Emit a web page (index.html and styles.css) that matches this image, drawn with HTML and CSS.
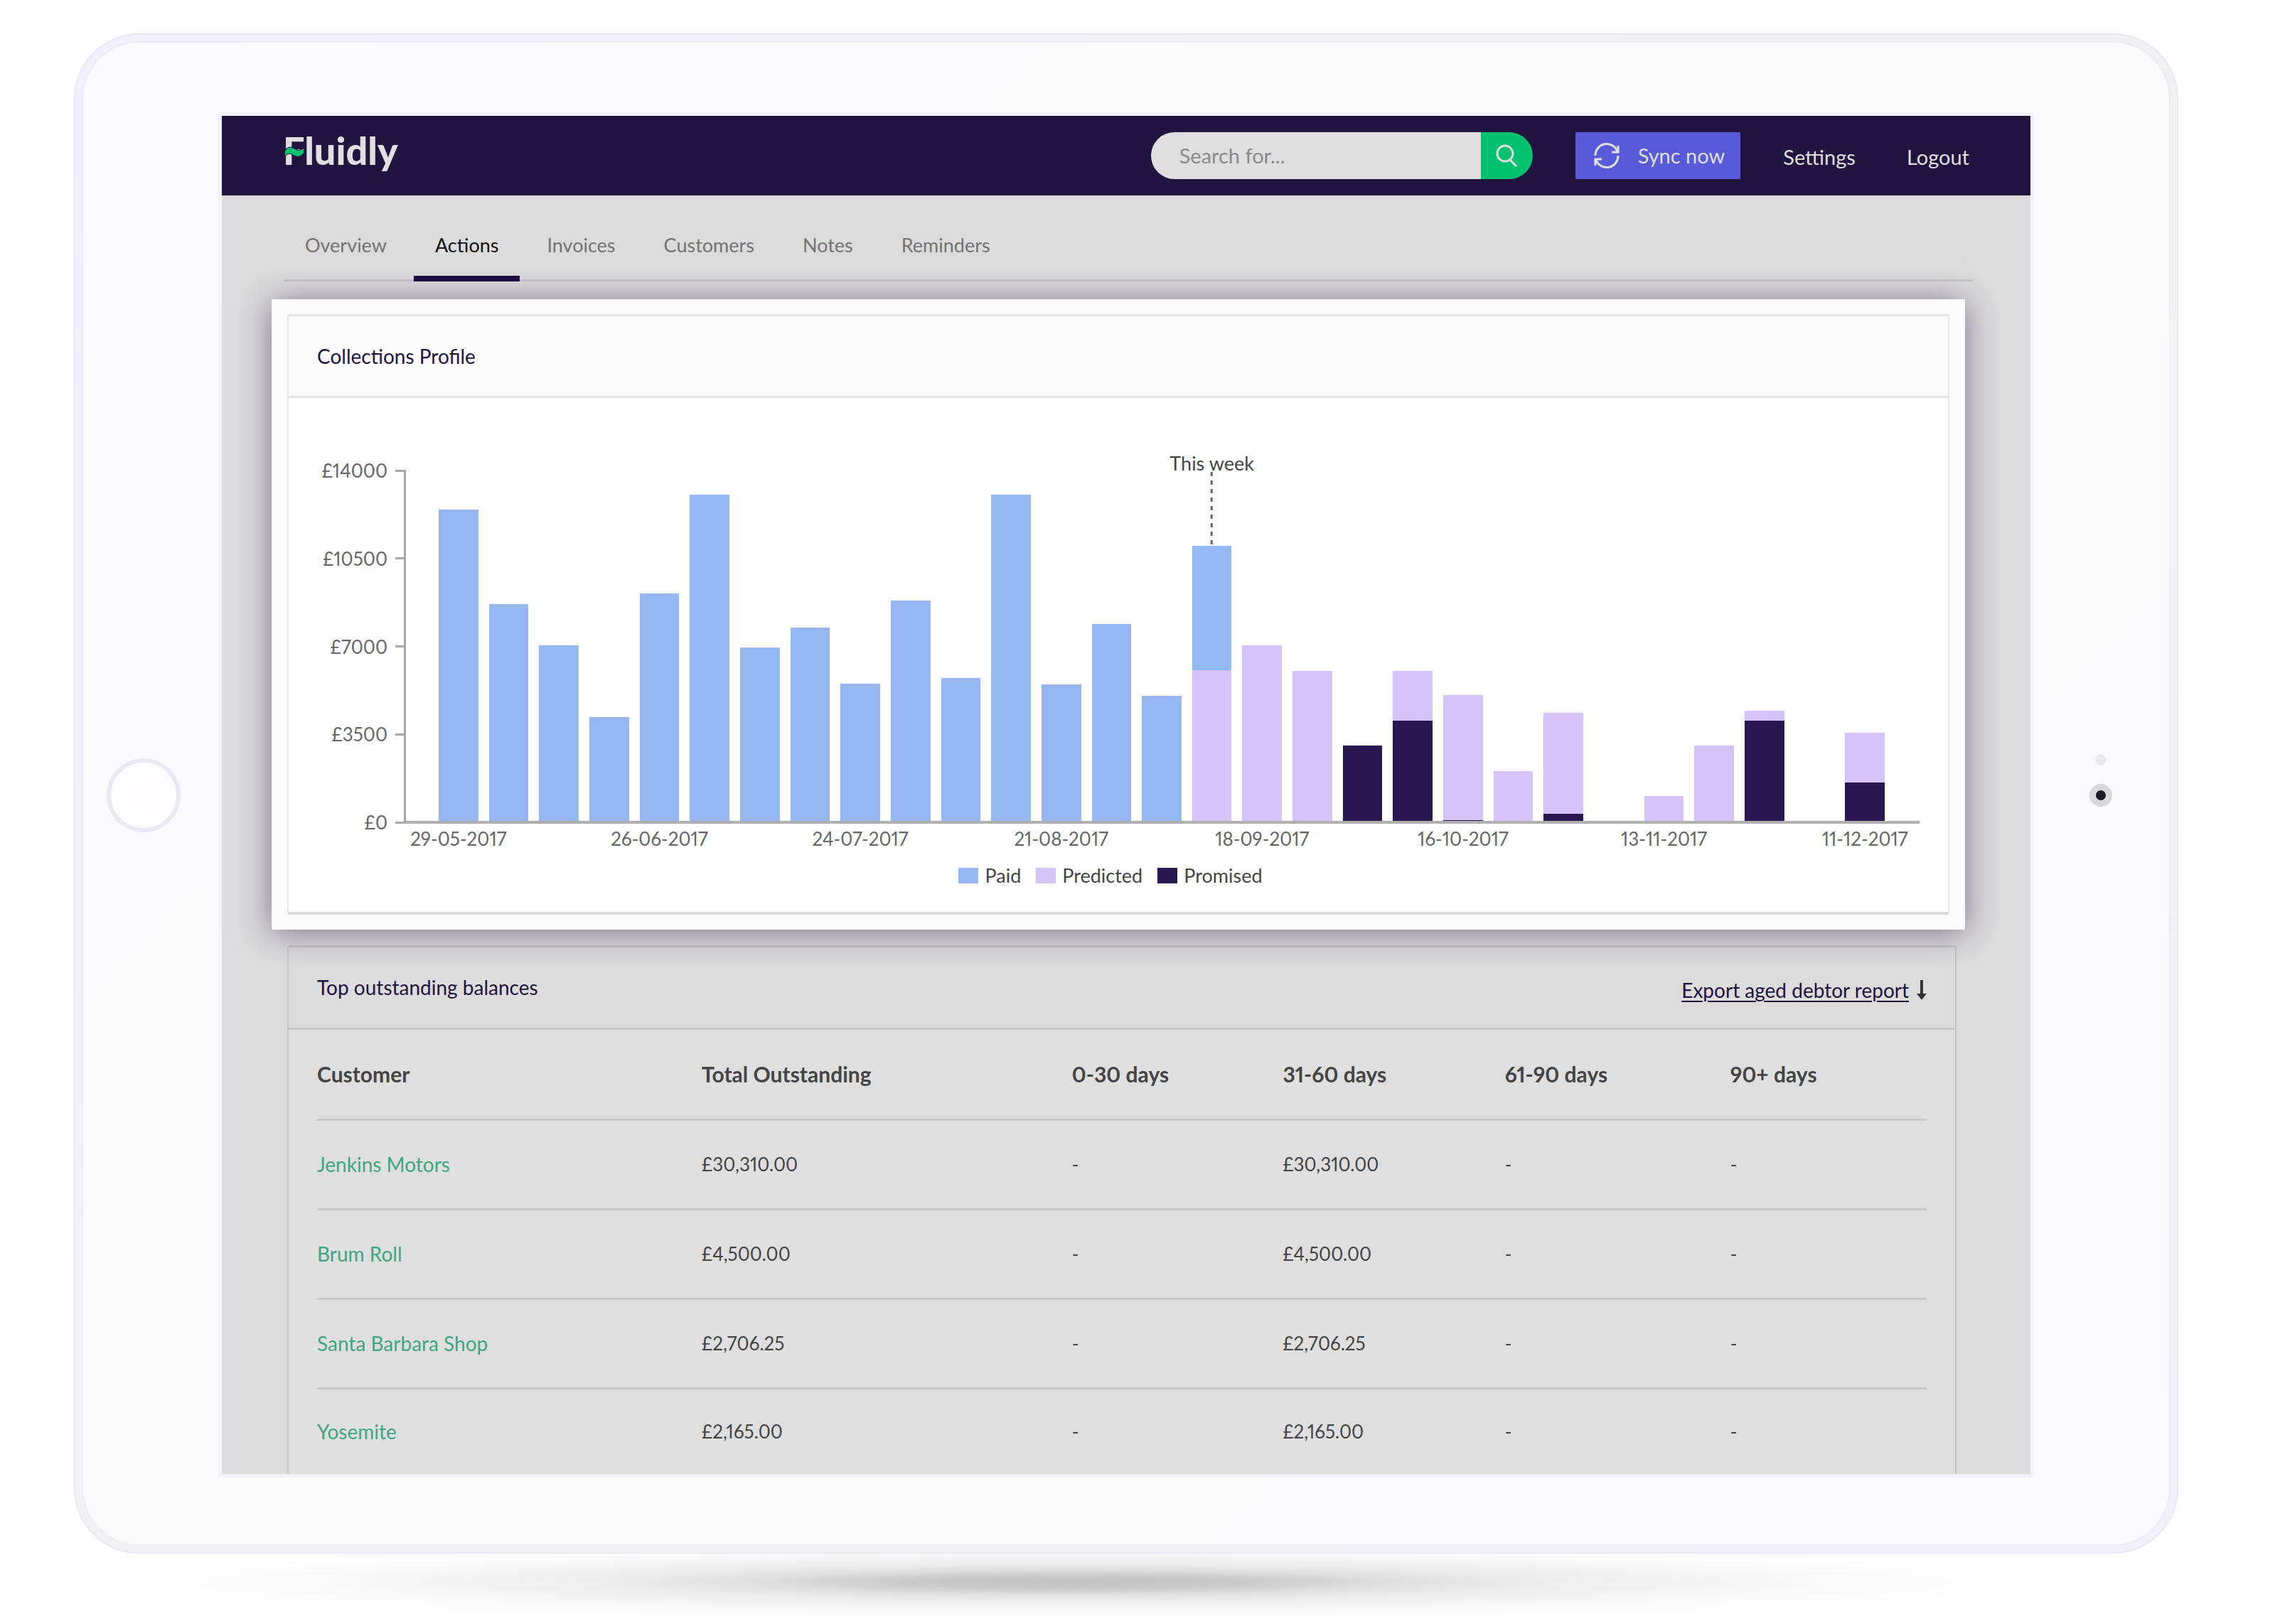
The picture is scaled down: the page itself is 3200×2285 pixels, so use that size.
FILE: index.html
```html
<!DOCTYPE html>
<html lang="en">
<head>
<meta charset="utf-8">
<title>Fluidly – Actions</title>
<link rel="stylesheet" href="styles.css">
</head>
<body>
<div class="tablet">
  <div class="tablet-face">
    <div class="home-button"></div>
    <div class="screen">
      <header class="topbar">
        <a class="logo" href="#" aria-label="Fluidly">Fluidly<svg class="logo-wave" viewBox="0 0 26 13" aria-hidden="true"><path d="M0 6C3 0 8 -1 13 2.500S21 6 26 2V8C22 13.500 17 14 12 11S4 8 0 12Z"/></svg></a>
        <form class="search">
          <input type="text" placeholder="Search for..." aria-label="Search">
          <button type="button" aria-label="Search">
            <svg viewBox="0 0 32 32" aria-hidden="true"><circle cx="14" cy="13" r="11"/><path d="M21 22l9 9"/></svg>
          </button>
        </form>
        <button class="sync" type="button">
          <svg viewBox="0 0 36 36" aria-hidden="true"><path d="M2 18A16 16 0 0 1 33 12M34 4v9h-9M34 18A16 16 0 0 1 3 24M2 32v-9h9"/></svg>
          Sync now
        </button>
        <nav class="account">
          <a href="#">Settings</a>
          <a href="#">Logout</a>
        </nav>
      </header>

      <nav class="tabs">
        <a href="#">Overview</a>
        <a href="#" class="active" aria-current="page">Actions</a>
        <a href="#">Invoices</a>
        <a href="#">Customers</a>
        <a href="#">Notes</a>
        <a href="#">Reminders</a>
      </nav>

      <section class="spotlight">
        <div class="panel">
          <h2 class="panel-title">Collections Profile</h2>
          <div class="chart">
            <div class="y-axis">
              <span>£14000</span><span>£10500</span><span>£7000</span><span>£3500</span><span>£0</span>
            </div>
            <div class="plot">
              <div class="bar"><i class="paid" style="height:88.6%"></i></div>
              <div class="bar"><i class="paid" style="height:61.7%"></i></div>
              <div class="bar"><i class="paid" style="height:50%"></i></div>
              <div class="bar"><i class="paid" style="height:29.5%"></i></div>
              <div class="bar"><i class="paid" style="height:64.7%"></i></div>
              <div class="bar"><i class="paid" style="height:92.9%"></i></div>
              <div class="bar"><i class="paid" style="height:49.3%"></i></div>
              <div class="bar"><i class="paid" style="height:55%"></i></div>
              <div class="bar"><i class="paid" style="height:39%"></i></div>
              <div class="bar"><i class="paid" style="height:62.7%"></i></div>
              <div class="bar"><i class="paid" style="height:40.7%"></i></div>
              <div class="bar"><i class="paid" style="height:92.9%"></i></div>
              <div class="bar"><i class="paid" style="height:38.9%"></i></div>
              <div class="bar"><i class="paid" style="height:56.1%"></i></div>
              <div class="bar"><i class="paid" style="height:35.6%"></i></div>
              <div class="bar"><i class="paid" style="height:35.5%"><span class="marker">This week</span></i><i class="predicted" style="height:42.9%"></i></div>
              <div class="bar"><i class="predicted" style="height:50%"></i></div>
              <div class="bar"><i class="predicted" style="height:42.8%"></i></div>
              <div class="bar"><i class="promised" style="height:21.4%"></i></div>
              <div class="bar"><i class="predicted" style="height:14.3%"></i><i class="promised" style="height:28.5%"></i></div>
              <div class="bar"><i class="predicted" style="height:35.5%"></i><i class="promised" style="height:0.3%"></i></div>
              <div class="bar"><i class="predicted" style="height:14.2%"></i></div>
              <div class="bar"><i class="predicted" style="height:28.6%"></i><i class="promised" style="height:2.1%"></i></div>
              <div class="bar"></div>
              <div class="bar"><i class="predicted" style="height:7.1%"></i></div>
              <div class="bar"><i class="predicted" style="height:21.4%"></i></div>
              <div class="bar"><i class="predicted" style="height:2.8%"></i><i class="promised" style="height:28.5%"></i></div>
              <div class="bar"></div>
              <div class="bar"><i class="predicted" style="height:14.3%"></i><i class="promised" style="height:10.9%"></i></div>
            </div>
            <div class="x-axis">
              <span>29-05-2017</span><span>26-06-2017</span><span>24-07-2017</span><span>21-08-2017</span><span>18-09-2017</span><span>16-10-2017</span><span>13-11-2017</span><span>11-12-2017</span>
            </div>
          </div>
          <ul class="legend">
            <li><i class="paid"></i>Paid</li>
            <li><i class="predicted"></i>Predicted</li>
            <li><i class="promised"></i>Promised</li>
          </ul>
        </div>
      </section>

      <section class="balances">
        <div class="balances-head">
          <h2>Top outstanding balances</h2>
          <div class="export">
            <a href="#">Export aged debtor report</a>
            <svg viewBox="0 0 14 28" aria-hidden="true"><path d="M5 0h4v19h5l-7 9-7-9h5z"/></svg>
          </div>
        </div>
        <table>
          <colgroup><col class="c-name"><col class="c-total"><col class="c-30"><col class="c-60"><col class="c-90"><col></colgroup>
          <thead>
            <tr><th scope="col">Customer</th><th scope="col">Total Outstanding</th><th scope="col">0-30 days</th><th scope="col">31-60 days</th><th scope="col">61-90 days</th><th scope="col">90+ days</th></tr>
          </thead>
          <tbody>
            <tr><td><a href="#">Jenkins Motors</a></td><td>£30,310.00</td><td>-</td><td>£30,310.00</td><td>-</td><td>-</td></tr>
            <tr><td><a href="#">Brum Roll</a></td><td>£4,500.00</td><td>-</td><td>£4,500.00</td><td>-</td><td>-</td></tr>
            <tr><td><a href="#">Santa Barbara Shop</a></td><td>£2,706.25</td><td>-</td><td>£2,706.25</td><td>-</td><td>-</td></tr>
            <tr><td><a href="#">Yosemite</a></td><td>£2,165.00</td><td>-</td><td>£2,165.00</td><td>-</td><td>-</td></tr>
          </tbody>
        </table>
      </section>
    </div>
    <div class="sensors"><span class="sensor"></span><span class="camera"></span></div>
  </div>
</div>
<div class="tablet-shadow"></div>
</body>
</html>
```

FILE: styles.css
```css
* { box-sizing: border-box; }

body {
  margin: 0;
  padding-top: 47px;
  background: #fff;
  color: #444;
  font: 28px/36px Lato, "Open Sans", sans-serif;
  font-variant-numeric: proportional-nums;
}

h2 { margin: 0; font: inherit; color: #21133f; }
a { color: inherit; text-decoration: none; }
button, input { font: inherit; border: 0; padding: 0; margin: 0; }

/* Device */
.tablet {
  margin: 0 136px 0 104px;
  padding: 13px;
  border-radius: 92px;
  background: linear-gradient(135deg, #f3f1fd, #f2f2f6 35%, #f2f2f5 65%, #f3f1fc);
  box-shadow: inset 0 0 2px 1px #e1dff0;
}

.tablet-face {
  display: grid;
  grid-template-columns: 195px minmax(0, 1fr) 195px;
  align-items: center;
  padding: 103px 0 99px;
  border-radius: 79px;
  background: linear-gradient(135deg, #faf9fe, #fafafc 20%, #fafafa 50%, #fafafc 80%, #faf9fe);
  box-shadow: 0 0 3px 1px #e9e7f4;
}

.home-button {
  width: 104px;
  height: 104px;
  margin-left: 33px;
  border: 6px solid #ebe9f6;
  border-radius: 50%;
  background: #fdfdff;
}

.sensors {
  display: flex;
  flex-direction: column;
  align-items: center;
  gap: 26px;
  padding: 0 0 42px 2px;
}
.sensor { width: 16px; height: 16px; border-radius: 50%; background: #eaebef; }
.camera { width: 32px; height: 32px; border: 9px solid #d9d8de; border-radius: 50%; background: #1e1c22; }

.tablet-shadow {
  height: 102px;
  margin: 0 60px 0 140px;
  background: radial-gradient(ellipse 1430px 56px at 1370px 40px,
    rgba(0,0,0,.24), rgba(0,0,0,.21) 16%, rgba(0,0,0,.12) 32%, rgba(0,0,0,.07) 46%,
    rgba(0,0,0,.035) 66%, rgba(0,0,0,.012) 84%, transparent);
}

/* App */
.screen { background: #dcdcdc; box-shadow: 0 0 0 5px #f4f3f9; }

.topbar {
  display: flex;
  align-items: center;
  height: 112px;
  padding: 0 86px;
  background: #221440;
  color: #dfdfdf;
  font-size: 29px;
}

.logo {
  position: relative;
  margin-right: auto;
  padding-bottom: 14px;
  font-size: 54px;
  font-weight: 900;
  line-height: 60px;
}
.logo-wave {
  position: absolute;
  left: 3px;
  top: 25px;
  width: 26px;
  height: 13px;
  fill: #07c56f;
  stroke: #221440;
  stroke-width: 2;
  paint-order: stroke;
  overflow: visible;
}

.search {
  display: flex;
  width: 537px;
  height: 66px;
  border-radius: 33px;
  overflow: hidden;
}
.search input {
  flex: 1;
  min-width: 0;
  padding-left: 40px;
  background: #dfdfdf;
  color: #444;
}
.search input::placeholder { color: #8a8a8a; opacity: 1; }
.search button { width: 73px; background: #00c16e; }
.search svg { display: block; width: 32px; margin: 0 auto; fill: none; stroke: #dfdfdf; stroke-width: 3; }

.sync {
  display: flex;
  align-items: center;
  gap: 26px;
  height: 66px;
  margin-left: 60px;
  padding: 0 22px 0 26px;
  background: #575bd9;
  color: #dfdfdf;
}
.sync svg { width: 36px; fill: none; stroke: #dfdfdf; stroke-width: 3; }

.account { display: flex; gap: 72px; margin-left: 60px; padding-top: 4px; }

.tabs {
  display: flex;
  gap: 8px;
  margin: 0 81px 0 87px;
  padding-top: 52px;
  box-shadow: inset 0 -3px #c6c6c8;
  color: #737373;
  font-size: 27px;
}
.tabs a { padding: 0 30px 25px; border-bottom: 8px solid transparent; }
.tabs .active { color: #111; border-color: #1c0b42; }

.spotlight {
  position: relative;
  margin: 25px 92px 0 70px;
  padding: 21px 22px;
  background: #fbfbfc;
  box-shadow: 0 4px 44px rgba(45, 25, 75, .55);
}

.panel { border: 2px solid #e6e6e7; border-width: 3px 2px 4px; border-bottom-color: #dcdcdd; border-radius: 4px; background: #fff; }
.panel-title { padding: 38px 40px; border-bottom: 3px solid #e6e6e7; background: #fbfbfb; }

.chart {
  display: grid;
  grid-template-columns: 162px minmax(0, 1fr);
  grid-template-rows: 498px auto;
  margin-right: 40px;
  padding-top: 101px;
}

.y-axis {
  display: flex;
  flex-direction: column;
  justify-content: space-between;
  margin: -17px 0 -16px;
  color: #666;
  font-size: 26px;
}
.y-axis span { display: flex; align-items: center; justify-content: flex-end; gap: 11px; }
.y-axis span::after { content: ""; width: 12px; height: 3px; background: #a6a6a6; }

.plot, .x-axis {
  display: grid;
  grid-template-columns: repeat(29, minmax(0, 1fr));
  gap: 15px;
  padding: 0 49px 0 46px;
}
.plot { border-left: 3px solid #a6a6a6; border-bottom: 4px solid #b0b0b0; }
.bar { display: flex; flex-direction: column; justify-content: flex-end; }
.bar i { position: relative; }

.paid { background: #95b8f2; }
.predicted { background: #d6c3fa; }
.promised { background: #291950; }

.marker {
  position: absolute;
  bottom: 100%;
  left: 50%;
  transform: translateX(-50%);
  font-size: 27px;
  font-style: normal;
  white-space: nowrap;
}
.marker::after {
  content: "";
  display: block;
  width: 3px;
  height: 104px;
  margin: -6px auto 0;
  background: repeating-linear-gradient(#666 0 6px, transparent 6px 12px);
}

.x-axis { grid-column: 2; padding-left: 49px; margin-top: 3px; color: #666; font-size: 26px; }
.x-axis span { grid-row: 1; justify-self: center; white-space: nowrap; }
.x-axis span:nth-child(1) { grid-column: 1; }
.x-axis span:nth-child(2) { grid-column: 5; }
.x-axis span:nth-child(3) { grid-column: 9; }
.x-axis span:nth-child(4) { grid-column: 13; }
.x-axis span:nth-child(5) { grid-column: 17; }
.x-axis span:nth-child(6) { grid-column: 21; }
.x-axis span:nth-child(7) { grid-column: 25; }
.x-axis span:nth-child(8) { grid-column: 29; }

.legend {
  display: flex;
  justify-content: center;
  gap: 21px;
  margin: 0;
  padding: 16px 22px 33px 0;
  list-style: none;
  font-size: 27px;
}
.legend li { display: flex; align-items: center; gap: 9px; }
.legend i { width: 28px; height: 22px; }

.balances {
  margin: 22px 104px 0 92px;
  border: 2px solid #c6c6c8;
  border-top-width: 3px;
  border-bottom: 0;
  border-radius: 4px 4px 0 0;
  background: #dfdfdf;
}
.balances-head {
  display: flex;
  justify-content: space-between;
  padding: 38px 40px 35px;
  border-bottom: 3px solid #c8c8c8;
  background: #dcdcdc;
}
.export { display: flex; align-items: center; gap: 11px; padding-top: 4px; color: #21133f; }
.export a { text-decoration: underline; text-decoration-thickness: 2px; text-underline-offset: 4px; }
.export svg { width: 14px; fill: #333; }

table { width: calc(100% - 80px); margin: 0 40px; table-layout: fixed; border-collapse: collapse; }
.c-name { width: 23.9%; }
.c-total { width: 23%; }
.c-30 { width: 13.1%; }
.c-60 { width: 13.8%; }
.c-90 { width: 14%; }
th, td { height: 126px; padding: 0; text-align: left; border-bottom: 3px solid #c8c8c8; }
th { font-size: 30px; }
td { font-size: 26px; }
td:first-child { font-size: 28px; }
tbody tr:last-child td { height: 121px; border-bottom: 0; }
td a { color: #3fa682; }
```
